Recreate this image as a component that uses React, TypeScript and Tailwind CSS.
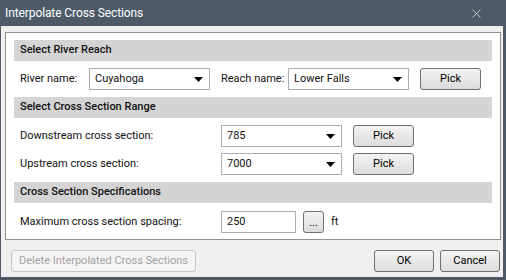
import { X } from 'lucide-react';

function Combo({ value, width }: { value: string; width: string }) {
  return (
    <div className={`${width} h-[22px] shrink-0 bg-white border border-[#abadb3] flex items-center justify-between pl-[5px] pr-[6px]`}>
      <span>{value}</span>
      <svg width="9" height="5" viewBox="0 0 9 5">
        <path d="M0 0h9L4.5 5z" fill="#000" />
      </svg>
    </div>
  );
}

function Btn({ children, className = '', disabled = false }: { children: React.ReactNode; className?: string; disabled?: boolean }) {
  return (
    <button
      className={`h-[22px] shrink-0 rounded-[3px] border flex items-center justify-center ${
        disabled
          ? 'border-[#c6c6c6] bg-[#f4f4f4] text-[#a3a3a3]'
          : 'border-[#707070] bg-gradient-to-b from-[#f3f3f3] to-[#dcdcdc] text-black'
      } ${className}`}
    >
      {children}
    </button>
  );
}

function Header({ title }: { title: string }) {
  return <div className="h-[21px] bg-[#d4d4d4] flex items-center px-[6px] font-medium">{title}</div>;
}

export default function App() {
  return (
    <div className="w-[506px] h-[280px] bg-[#4e5a68] flex flex-col pl-px pr-[3px] pb-[3px] font-['Roboto',sans-serif] text-[11px] text-[#111]">
      <div className="h-[26px] shrink-0 flex items-center justify-between pl-[4px] pr-[19px] text-white text-[12px] tracking-[-0.1px]">
        <span>Interpolate Cross Sections</span>
        <X className="w-[15px] h-[15px] text-[#eef0f2]" strokeWidth={1.1} />
      </div>
      <div className="flex-1 bg-[#f0f0f0] flex flex-col pt-[6px] pb-[5px]">
        <div className="ml-[4px] mr-[2px] border border-[#8e8f8f] bg-white px-[8px] pt-[7px] pb-[6px] flex flex-col">
          <Header title="Select River Reach" />
          <div className="flex items-center h-[22px] my-[7px] pl-[6px]">
            <span className="w-[69px] shrink-0">River name:</span>
            <Combo value="Cuyahoga" width="w-[121px]" />
            <span className="w-[67px] shrink-0 ml-[11px]">Reach name:</span>
            <Combo value="Lower Falls" width="w-[121px]" />
            <Btn className="w-[61px] ml-[11px]">Pick</Btn>
          </div>
          <Header title="Select Cross Section Range" />
          <div className="flex flex-col gap-[6px] my-[7px] pl-[6px]">
            <div className="flex items-center h-[22px]">
              <span className="w-[201px] shrink-0">Downstream cross section:</span>
              <Combo value="785" width="w-[121px]" />
              <Btn className="w-[61px] ml-[11px]">Pick</Btn>
            </div>
            <div className="flex items-center h-[22px]">
              <span className="w-[201px] shrink-0">Upstream cross section:</span>
              <Combo value="7000" width="w-[121px]" />
              <Btn className="w-[61px] ml-[11px]">Pick</Btn>
            </div>
          </div>
          <Header title="Cross Section Specifications" />
          <div className="flex items-center h-[22px] mt-[8px] pl-[6px]">
            <span className="w-[201px] shrink-0">Maximum cross section spacing:</span>
            <div className="w-[75px] h-[22px] shrink-0 bg-white border border-[#abadb3] flex items-center pl-[5px]">250</div>
            <Btn className="w-[21px] ml-[7px] items-end pb-[4px] leading-none">...</Btn>
            <span className="ml-[7px]">ft</span>
          </div>
        </div>
        <div className="mt-auto flex items-center pl-[10px] pr-[3px]">
          <Btn disabled className="w-[185px]">Delete Interpolated Cross Sections</Btn>
          <Btn className="w-[60px] ml-auto">OK</Btn>
          <Btn className="w-[60px] ml-[6px]">Cancel</Btn>
        </div>
      </div>
    </div>
  );
}
